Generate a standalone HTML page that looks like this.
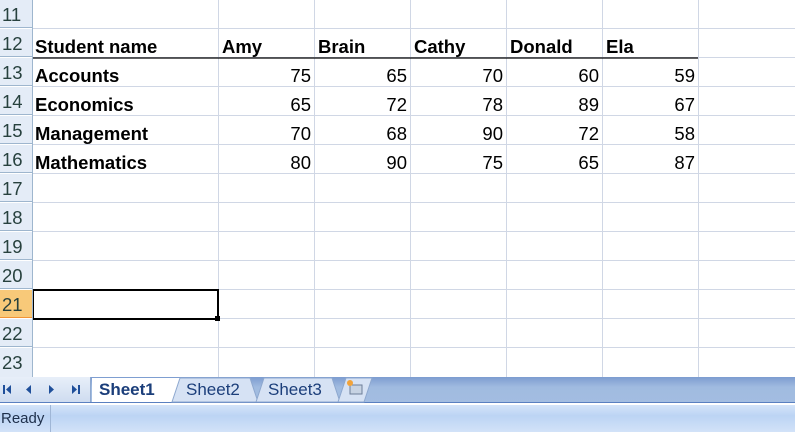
<!DOCTYPE html><html><head><style>
body{margin:0;width:795px;height:432px;overflow:hidden;background:#fff;font-family:"Liberation Sans",sans-serif;position:relative}
.g{position:absolute;left:0;top:0}
.c{position:absolute;font-size:18.5px;line-height:29px;color:#000;margin-top:2px}
.b{font-weight:bold}
.h{position:absolute;left:0;width:32px;height:28px;background:#e4ecf7;color:#27413e;font-size:18.5px;line-height:30px;padding-left:2px;box-sizing:border-box;border-bottom:1px solid #9eb6ce}
</style></head><body>
<svg class="g" width="795" height="377">
<g stroke="#d0d7e5" stroke-width="1">
<line x1="218.5" y1="0" x2="218.5" y2="377"/><line x1="314.5" y1="0" x2="314.5" y2="377"/><line x1="410.5" y1="0" x2="410.5" y2="377"/><line x1="506.5" y1="0" x2="506.5" y2="377"/><line x1="602.5" y1="0" x2="602.5" y2="377"/><line x1="698.5" y1="0" x2="698.5" y2="377"/>
<line x1="32" y1="28.5" x2="795" y2="28.5"/><line x1="32" y1="57.5" x2="795" y2="57.5"/><line x1="32" y1="86.5" x2="795" y2="86.5"/><line x1="32" y1="115.5" x2="795" y2="115.5"/><line x1="32" y1="144.5" x2="795" y2="144.5"/><line x1="32" y1="173.5" x2="795" y2="173.5"/><line x1="32" y1="202.5" x2="795" y2="202.5"/><line x1="32" y1="231.5" x2="795" y2="231.5"/><line x1="32" y1="260.5" x2="795" y2="260.5"/><line x1="32" y1="289.5" x2="795" y2="289.5"/><line x1="32" y1="318.5" x2="795" y2="318.5"/><line x1="32" y1="347.5" x2="795" y2="347.5"/>
</g>
<line x1="32" y1="58" x2="698" y2="58" stroke="#000" stroke-width="1.3"/>
<rect x="33" y="290" width="185" height="29" fill="none" stroke="#000" stroke-width="2"/>
<rect x="215" y="316" width="5" height="5" fill="#000"/>
<line x1="32.5" y1="0" x2="32.5" y2="377" stroke="#9eb6ce"/>
</svg>
<div class="h" style="top:0">11</div><div class="h" style="top:29px">12</div><div class="h" style="top:58px">13</div><div class="h" style="top:87px">14</div><div class="h" style="top:116px">15</div><div class="h" style="top:145px">16</div><div class="h" style="top:174px">17</div><div class="h" style="top:203px">18</div><div class="h" style="top:232px">19</div><div class="h" style="top:261px">20</div><div class="h" style="top:290px;background:#f8c979;border-bottom-color:#f29436">21</div><div class="h" style="top:319px">22</div><div class="h" style="top:348px;height:29px;border:0">23</div>
<div class="c b" style="left:35px;top:30px">Student name</div>
<div class="c b" style="left:222px;top:30px">Amy</div>
<div class="c b" style="left:318px;top:30px">Brain</div>
<div class="c b" style="left:414px;top:30px">Cathy</div>
<div class="c b" style="left:510px;top:30px">Donald</div>
<div class="c b" style="left:606px;top:30px">Ela</div>
<div class="c b" style="left:35px;top:59px">Accounts</div>
<div class="c b" style="left:35px;top:88px">Economics</div>
<div class="c b" style="left:35px;top:117px">Management</div>
<div class="c b" style="left:35px;top:146px">Mathematics</div>
<div style="position:absolute;left:218px;top:61px;width:480px">
<div style="display:grid;grid-template-columns:repeat(5,96px);font-size:18.5px;line-height:29px;text-align:right">
<span style="padding-right:3px">75</span><span style="padding-right:3px">65</span><span style="padding-right:3px">70</span><span style="padding-right:3px">60</span><span style="padding-right:3px">59</span>
<span style="padding-right:3px">65</span><span style="padding-right:3px">72</span><span style="padding-right:3px">78</span><span style="padding-right:3px">89</span><span style="padding-right:3px">67</span>
<span style="padding-right:3px">70</span><span style="padding-right:3px">68</span><span style="padding-right:3px">90</span><span style="padding-right:3px">72</span><span style="padding-right:3px">58</span>
<span style="padding-right:3px">80</span><span style="padding-right:3px">90</span><span style="padding-right:3px">75</span><span style="padding-right:3px">65</span><span style="padding-right:3px">87</span>
</div></div>
<div style="position:absolute;left:0;top:377px;width:795px;height:25px;background:linear-gradient(#7d9dd0,#a0bbe0 40%,#a3bde1);border-bottom:1px solid #5a80c0"></div>
<div style="position:absolute;left:0;top:377px;width:90px;height:25px;background:linear-gradient(#e8eff9,#cfdcf0);border-right:1px solid #8ea8cf"></div>
<svg class="g" style="top:377px" width="400" height="26">
<g fill="#1f4f9a"><rect x="3" y="8" width="2" height="9"/><path d="M6 12.5 L11 8 L11 17Z"/><path d="M26 12.5 L31 8 L31 17Z"/><path d="M49 8 L54 12.5 L49 17Z"/><path d="M72 8 L77 12.5 L72 17Z"/><rect x="78" y="8" width="2" height="9"/></g>
<path d="M92 1 L92 25 L172 25 L180 1Z" fill="#fff"/>
<path d="M172 25 L180 1 L250 1 L258 25Z" fill="#d6e2f4" stroke="#8ea8cf"/>
<path d="M256 25 L264 1 L332 1 L340 25Z" fill="#d6e2f4" stroke="#8ea8cf"/>
<path d="M338 25 L346 1 L372 1 L364 25Z" fill="#d6e2f4" stroke="#8ea8cf"/>
<rect x="350" y="8" width="12" height="9" fill="#c7d3e3" stroke="#6d7f99"/>
<circle cx="350" cy="6" r="3" fill="#f2a33a"/>
</svg>
<div style="position:absolute;left:99px;top:380px;font-size:17px;font-weight:bold;color:#1b3e7a">Sheet1</div>
<div style="position:absolute;left:186px;top:380px;font-size:17px;color:#1b3e7a">Sheet2</div>
<div style="position:absolute;left:268px;top:380px;font-size:17px;color:#1b3e7a">Sheet3</div>
<div style="position:absolute;left:0;top:405px;width:795px;height:27px;background:linear-gradient(#d4e4f9,#bcd4f4 40%,#d2e2f8)"></div>
<div style="position:absolute;left:50px;top:405px;width:1px;height:27px;background:#9fb6d6"></div>
<div style="position:absolute;left:1px;top:410px;font-size:15px;color:#1e2f4a">Ready</div>
</body></html>
